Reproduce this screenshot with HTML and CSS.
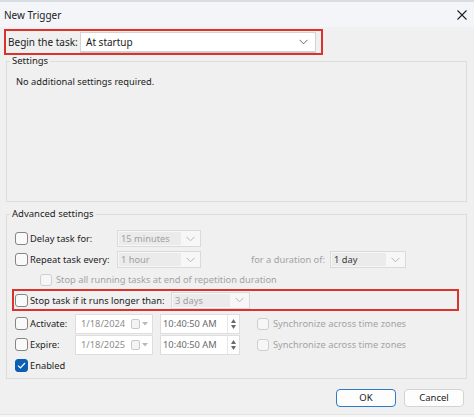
FILE: index.html
```html
<!DOCTYPE html>
<html>
<head>
<meta charset="utf-8">
<link rel="stylesheet" href="styles.css">
</head>
<body>
<div class="window">
  <div class="topstrip"></div>
  <div class="titlebar">
    <span class="title">New Trigger</span>
    <svg class="close" width="10" height="10" viewBox="0 0 10 10"><path d="M0.5 0.5 L9.5 9.5 M9.5 0.5 L0.5 9.5" stroke="#1f1f1f" stroke-width="1.1" fill="none"/></svg>
  </div>

  <div class="begin-row">
    <span class="begin-label">Begin the task:</span>
    <div class="combo combo-main">
      <span class="combo-val">At startup</span>
      <svg class="chev" width="9" height="6" viewBox="0 0 9 6"><path d="M0.5 0.8 L4.5 4.8 L8.5 0.8" stroke="#6b6b6b" stroke-width="1" fill="none"/></svg>
    </div>
  </div>

  <fieldset class="group group-settings">
    <legend>Settings</legend>
    <div class="settings-body">No additional settings required.</div>
  </fieldset>

  <fieldset class="group group-adv">
    <legend>Advanced settings</legend>
    <div class="adv-body">
      <div class="row row-delay">
        <span class="cb"></span>
        <span class="lbl lbl-delay">Delay task for:</span>
        <div class="combo combo-dis w84">
          <span class="combo-val">15 minutes</span>
          <svg class="chev" width="9" height="6" viewBox="0 0 9 6"><path d="M0.5 0.8 L4.5 4.8 L8.5 0.8" stroke="#b5b5b5" stroke-width="1" fill="none"/></svg>
        </div>
      </div>
      <div class="row row-repeat">
        <span class="cb"></span>
        <span class="lbl lbl-delay">Repeat task every:</span>
        <div class="combo combo-dis w84">
          <span class="combo-val">1 hour</span>
          <svg class="chev" width="9" height="6" viewBox="0 0 9 6"><path d="M0.5 0.8 L4.5 4.8 L8.5 0.8" stroke="#b5b5b5" stroke-width="1" fill="none"/></svg>
        </div>
        <span class="dis-text dur-label">for a duration of:</span>
        <div class="combo combo-dis w76">
          <span class="combo-val dark">1 day</span>
          <svg class="chev" width="9" height="6" viewBox="0 0 9 6"><path d="M0.5 0.8 L4.5 4.8 L8.5 0.8" stroke="#b5b5b5" stroke-width="1" fill="none"/></svg>
        </div>
      </div>
      <div class="row row-stopall">
        <span class="cb cb-dis"></span>
        <span class="dis-text stopall-text">Stop all running tasks at end of repetition duration</span>
      </div>
      <div class="row row-stop">
        <span class="cb"></span>
        <span class="lbl lbl-stop">Stop task if it runs longer than:</span>
        <div class="combo combo-dis w79">
          <span class="combo-val">3 days</span>
          <svg class="chev" width="9" height="6" viewBox="0 0 9 6"><path d="M0.5 0.8 L4.5 4.8 L8.5 0.8" stroke="#b5b5b5" stroke-width="1" fill="none"/></svg>
        </div>
      </div>
      <div class="row row-date row-activate">
        <span class="cb"></span>
        <span class="lbl lbl-date">Activate:</span>
        <div class="datebox">
          <span class="date-val">1/18/2024</span>
          <span class="cal"></span>
          <svg class="tri" width="6" height="4" viewBox="0 0 6 4"><path d="M0 0 L6 0 L3 3.5 Z" fill="#b9b9b9"/></svg>
        </div>
        <div class="timebox">
          <span class="time-val">10:40:50 AM</span>
          <span class="spin">
            <svg width="5" height="4" viewBox="0 0 5 4"><path d="M0 4 L5 4 L2.5 0 Z" fill="#6a6a6a"/></svg>
            <svg width="5" height="4" viewBox="0 0 5 4"><path d="M0 0 L5 0 L2.5 4 Z" fill="#6a6a6a"/></svg>
          </span>
        </div>
        <span class="cb cb-dis sync-cb"></span>
        <span class="dis-text">Synchronize across time zones</span>
      </div>
      <div class="row row-date">
        <span class="cb"></span>
        <span class="lbl lbl-date">Expire:</span>
        <div class="datebox">
          <span class="date-val">1/18/2025</span>
          <span class="cal"></span>
          <svg class="tri" width="6" height="4" viewBox="0 0 6 4"><path d="M0 0 L6 0 L3 3.5 Z" fill="#b9b9b9"/></svg>
        </div>
        <div class="timebox">
          <span class="time-val">10:40:50 AM</span>
          <span class="spin">
            <svg width="5" height="4" viewBox="0 0 5 4"><path d="M0 4 L5 4 L2.5 0 Z" fill="#6a6a6a"/></svg>
            <svg width="5" height="4" viewBox="0 0 5 4"><path d="M0 0 L5 0 L2.5 4 Z" fill="#6a6a6a"/></svg>
          </span>
        </div>
        <span class="cb cb-dis sync-cb"></span>
        <span class="dis-text">Synchronize across time zones</span>
      </div>
      <div class="row row-enabled">
        <span class="cb cb-on">
          <svg width="9" height="7" viewBox="0 0 9 7"><path d="M1 3.6 L3.4 6 L8 1" stroke="#ffffff" stroke-width="1.2" fill="none"/></svg>
        </span>
        <span class="lbl">Enabled</span>
      </div>
    </div>
  </fieldset>

  <div class="buttons">
    <button class="btn btn-ok">OK</button>
    <button class="btn">Cancel</button>
  </div>
  <div class="bottomstrip"></div>
</div>
</body>
</html>
```
FILE: styles.css
```css
* { box-sizing: border-box; }
html, body { margin: 0; padding: 0; }
body {
  width: 474px;
  height: 417px;
  overflow: hidden;
  background: #f0f0f0;
  font-family: "Noto Sans", "DejaVu Sans", sans-serif;
  font-size: 9.3px;
  color: #222222;
}
.window { width: 474px; height: 417px; display: flex; flex-direction: column; }
.topstrip { height: 2px; background: #d9dce1; }
.titlebar {
  height: 25px;
  background: #f3f5f9;
  display: flex;
  align-items: center;
  justify-content: space-between;
  padding: 0 7px 0 4px;
}
.title { font-size: 10px; line-height: 12px; }
.close { display: block; margin-top: 1px; }

.begin-row {
  margin: 2px 0 0 4px;
  width: 319px;
  height: 26px;
  border: 2px solid #d9342b;
  display: flex;
  align-items: center;
  padding: 0 5px 0 2px;
}
.begin-label { width: 72px; font-size: 10px; }
.combo {
  display: flex;
  align-items: center;
  border: 1px solid #d6d6d6;
  background: #ffffff;
}
.combo-main { flex: 1; height: 20px; padding: 0 7px 0 5px; border-color: #d3d3d3; box-shadow: 0 1px 0 #c9c9c9; }
.combo-main .combo-val { flex: 1; font-size: 10px; color: #1a1a1a; }
.chev { display: block; }

.group {
  margin: 0 0 0 6px;
  width: 461px;
  border: 1px solid #dcdcdc;
  padding: 0;
  min-width: 0;
}
.group legend {
  margin-left: 3px;
  padding: 0 2px;
  line-height: 12px;
  font-size: 9.5px;
  color: #222222;
}
.group-settings { margin-top: 0; }
.settings-body { height: 134px; padding: 9px 0 0 9px; line-height: 12px; }
.group-adv { margin-top: 6px; }
.adv-body { padding: 8px 0 2px 0; }

.row { display: flex; align-items: center; padding-left: 8px; height: 21px; }
.cb {
  width: 13px;
  height: 13px;
  border: 1px solid #858585;
  border-radius: 3px;
  background: #f9f9f9;
  flex: none;
  display: flex;
  align-items: center;
  justify-content: center;
}
.cb-dis { border-color: #cfcfcf; background: #f6f6f6; }
.cb-on { background: #0a5fb4; border-color: #0a5fb4; }
.lbl { margin-left: 2px; color: #222222; }
.lbl-delay { width: 87px; }
.lbl-stop { width: 141px; }
.lbl-date { width: 45px; }
.dis-text { color: #a3a3a3; }

.combo-dis {
  height: 17px;
  border-color: #dadada;
  background: #f7f7f7;
  padding: 1px 5px 1px 1px;
}
.combo-dis .combo-val {
  flex: 1;
  height: 100%;
  background: #ebebeb;
  color: #a0a0a0;
  padding-left: 2px;
  display: flex;
  align-items: center;
  margin-right: 5px;
}
.combo-dis .combo-val.dark { color: #3a3a3a; }
.w84 { width: 84px; }
.w76 { width: 76px; }
.w79 { width: 79px; }
.dur-label { margin-left: 50px; width: 79px; }

.row-stopall { padding-left: 33px; height: 19px; }
.cb-dis.cb { width: 12px; height: 12px; }
.stopall-text { margin-left: 4px; }

.row-stop {
  margin-left: 5px;
  width: 447px;
  height: 22px;
  border: 2px solid #d9342b;
  padding-left: 1px;
}
.row-date { height: 21px; }
.row-activate { margin-top: 2px; }
.datebox {
  width: 78px;
  height: 20px;
  background: #ffffff;
  border: 1px solid #dedede;
  display: flex;
  align-items: center;
  padding: 0 4px 0 5px;
}
.date-val { flex: 1; color: #8d8d8d; }
.cal {
  width: 9px;
  height: 10px;
  border: 1px solid #c9c9c9;
  border-radius: 2px;
  background: #f4f4f4;
  margin-right: 2px;
}
.tri { display: block; }
.timebox {
  width: 80px;
  height: 20px;
  margin-left: 7px;
  background: #ffffff;
  border: 1px solid #dedede;
  display: flex;
  align-items: center;
  padding: 0 0 0 2px;
}
.time-val { flex: 1; color: #6a6a6a; }
.spin {
  width: 12px;
  height: 18px;
  border-left: 1px solid #e6e6e6;
  display: flex;
  flex-direction: column;
  align-items: center;
  justify-content: center;
  gap: 2px;
}
.spin svg { display: block; }
.sync-cb { margin-left: 17px; margin-right: 4px; }
.row-enabled { height: 21px; }

.buttons {
  display: flex;
  justify-content: flex-end;
  gap: 8px;
  padding: 10px 10px 0 0;
}
.btn {
  width: 60px;
  height: 18px;
  background: #fdfdfd;
  border: 1px solid #d3d3d3;
  border-radius: 4px;
  font-family: "Noto Sans", "DejaVu Sans", sans-serif;
  font-size: 9.5px;
  color: #222222;
  padding: 0;
  line-height: 16px;
}
.btn-ok { border: 1.5px solid #2f79c8; }
.bottomstrip { margin-top: auto; height: 3px; background: #f7f7f7; border-top: 1px solid #e3e3e3; }
```
